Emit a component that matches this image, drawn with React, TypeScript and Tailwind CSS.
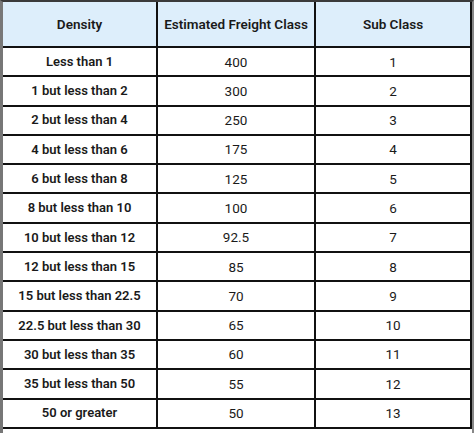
import React from 'react';

const rows: [string, string, string][] = [
  ['Less than 1', '400', '1'],
  ['1 but less than 2', '300', '2'],
  ['2 but less than 4', '250', '3'],
  ['4 but less than 6', '175', '4'],
  ['6 but less than 8', '125', '5'],
  ['8 but less than 10', '100', '6'],
  ['10 but less than 12', '92.5', '7'],
  ['12 but less than 15', '85', '8'],
  ['15 but less than 22.5', '70', '9'],
  ['22.5 but less than 30', '65', '10'],
  ['30 but less than 35', '60', '11'],
  ['35 but less than 50', '55', '12'],
  ['50 or greater', '50', '13'],
];

export default function App() {
  return (
    <div className="w-[474px] h-[433px] bg-white font-['Roboto',sans-serif] text-[#1a1a1a]">
      <div className="border-t-2 border-t-[#3a3a3a] border-l-[3px] border-l-[#777] border-r-2 border-r-[#888] pb-[5px]">
        {/* Header */}
        <div className="flex h-[46px] bg-[#ddeefb] border-b-2 border-b-[#111] text-[13.5px] font-semibold">
          <div className="w-[155px] flex items-center justify-center border-r-2 border-r-[#111]">Density</div>
          <div className="w-[158px] flex items-center justify-center border-r-2 border-r-[#111]">Estimated Freight Class</div>
          <div className="flex-1 flex items-center justify-center border-r-2 border-r-[#111]">Sub Class</div>
        </div>
        {rows.map(([d, f, s], i) => (
          <div key={i} className="flex h-[29.3px] border-b-2 border-b-[#111] text-[13.5px]">
            <div className="w-[155px] flex items-center justify-center border-r-2 border-r-[#111] font-semibold text-[13px]">{d}</div>
            <div className="w-[158px] flex items-center justify-center border-r-2 border-r-[#111]">{f}</div>
            <div className="flex-1 flex items-center justify-center border-r-2 border-r-[#111]">{s}</div>
          </div>
        ))}
      </div>
    </div>
  );
}
